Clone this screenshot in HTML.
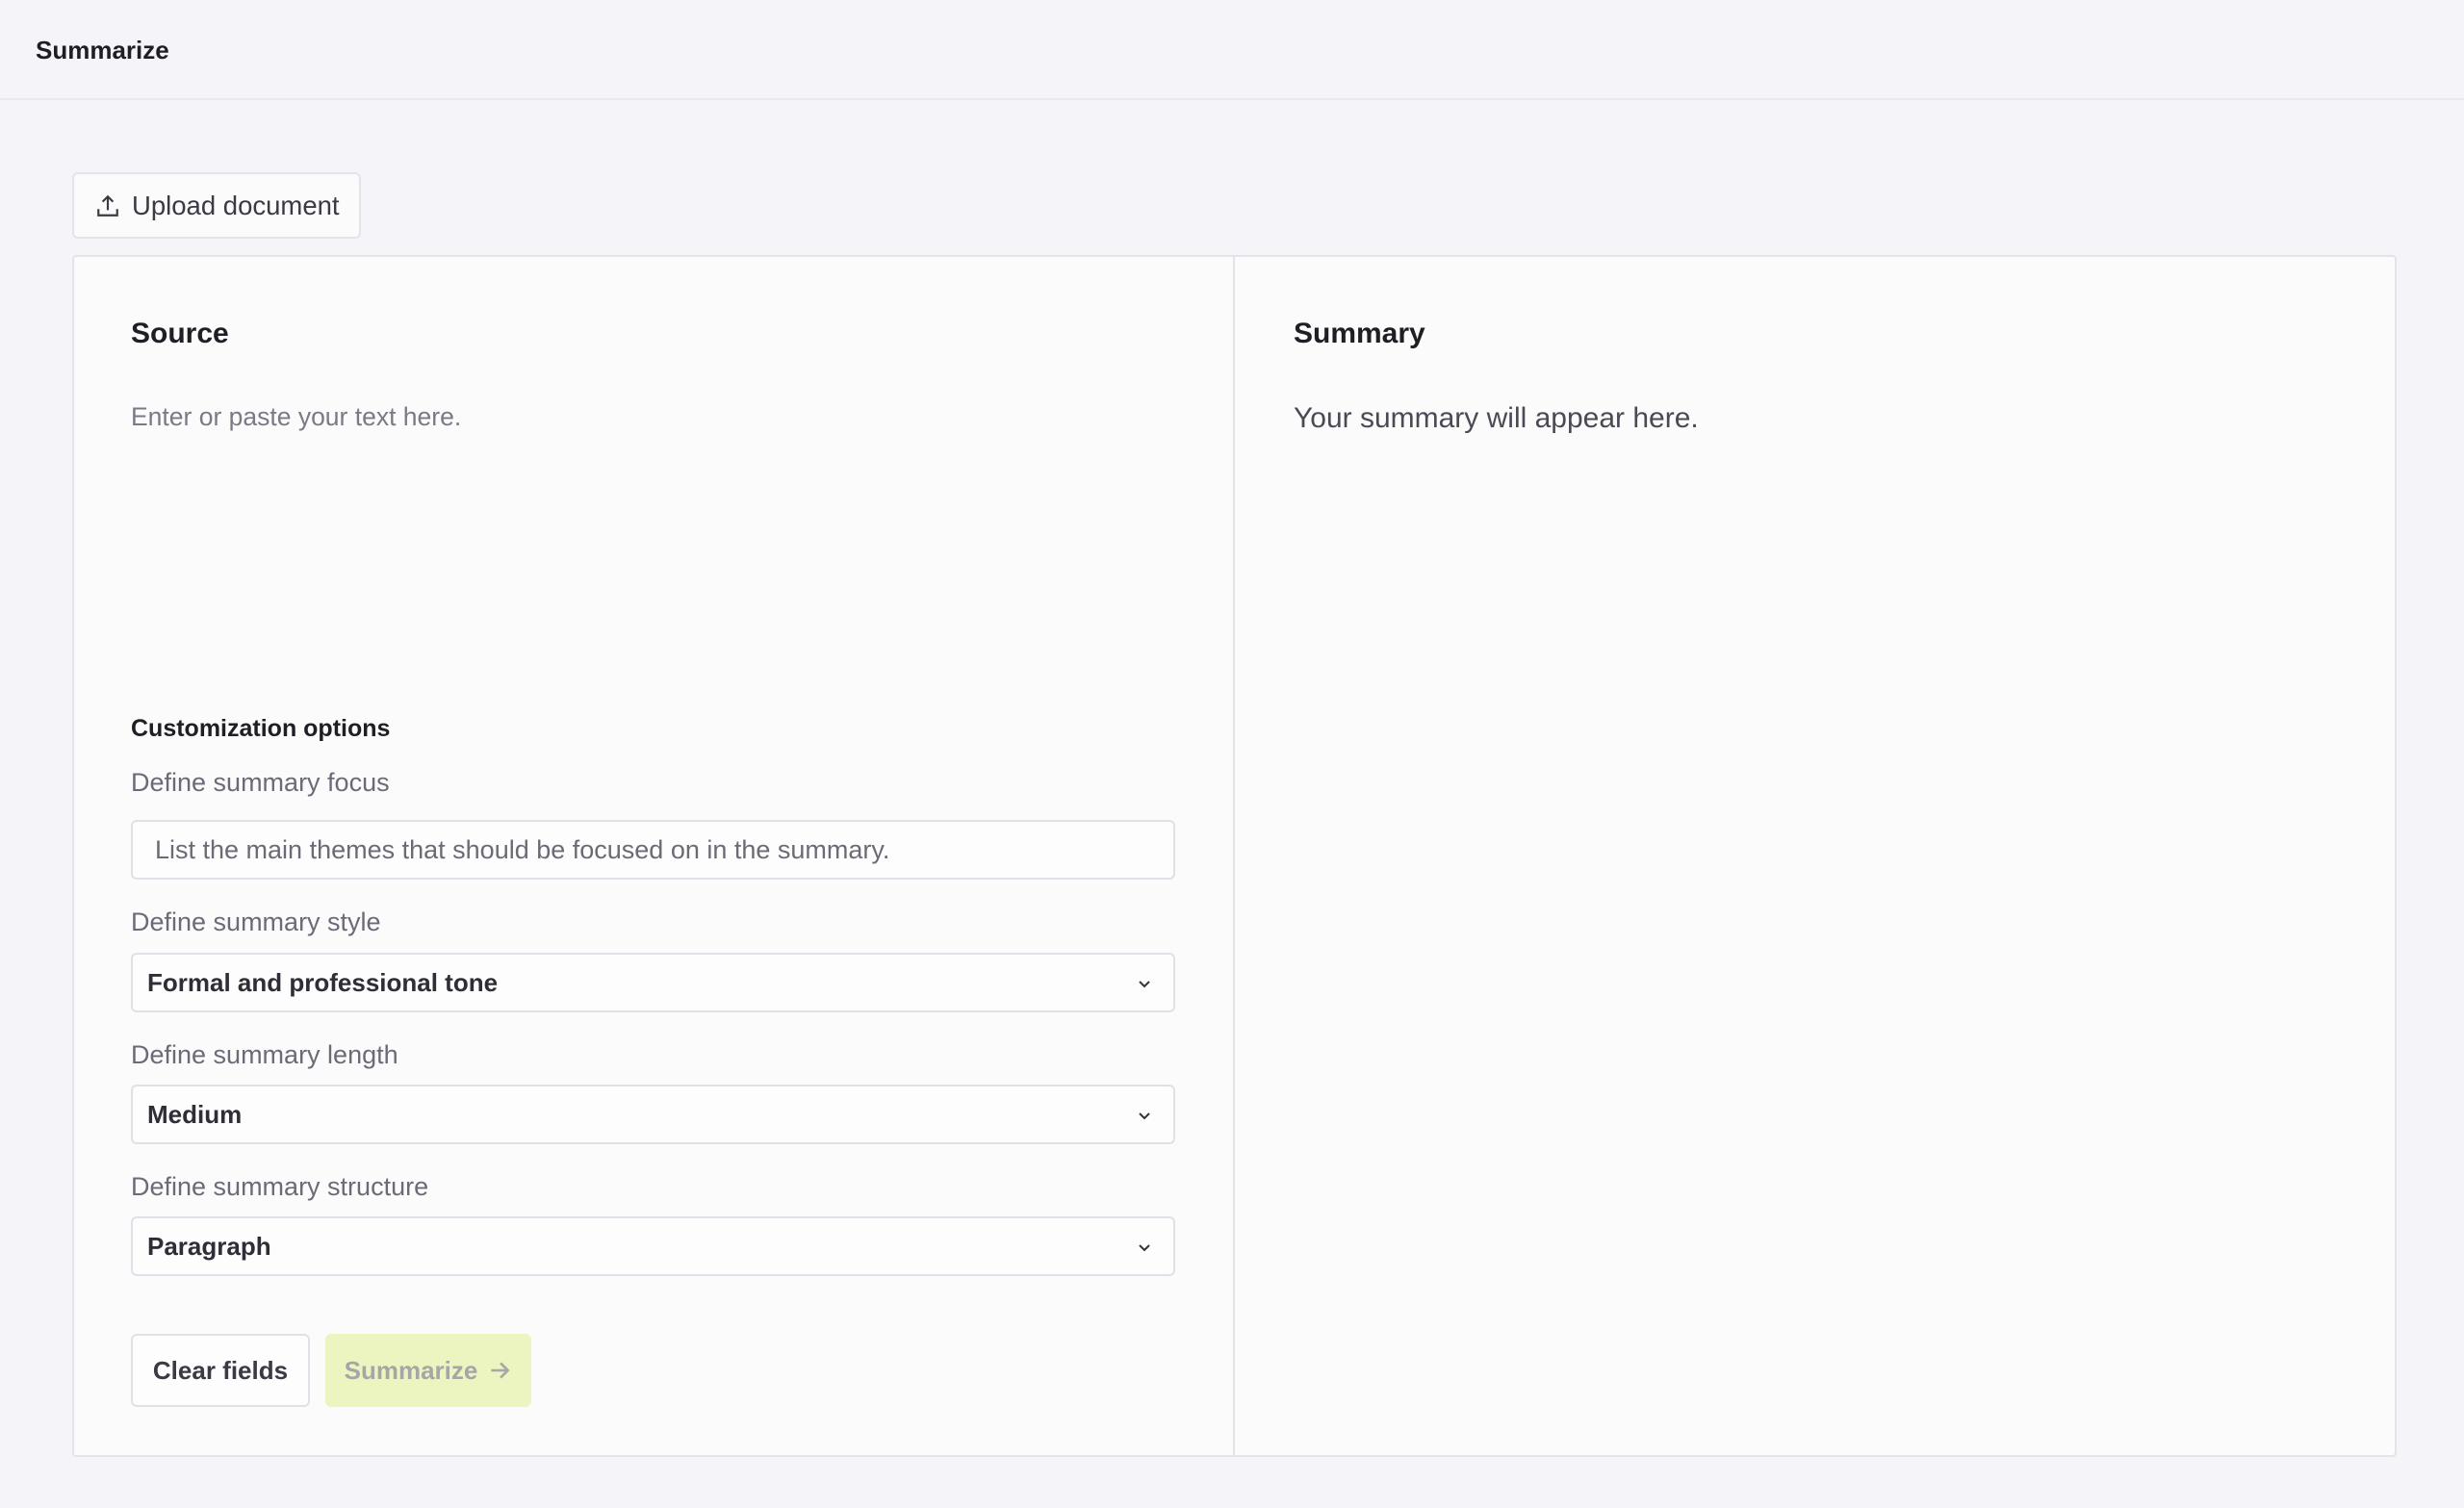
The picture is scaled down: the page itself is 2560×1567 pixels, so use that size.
<!DOCTYPE html>
<html><head><meta charset="utf-8"><style>
*{box-sizing:border-box;margin:0;padding:0}
body{width:2560px;height:1567px;background:#f5f5f9;font-family:"Liberation Sans",sans-serif;position:relative;overflow:hidden;color:#1e1e24}
.a{position:absolute}
.hdr{left:0;top:0;width:2560px;height:104px;border-bottom:2px solid #e8e8ee}
.title{left:37px;top:37px;font-size:26px;font-weight:bold}
.up{left:75px;top:179px;width:300px;height:69px;border:2px solid #e3e3ea;border-radius:6px;background:#fbfbfc;font-size:27.5px;color:#3a3a44;display:flex;align-items:center;padding-left:22px;gap:12px}
.card{left:75px;top:265px;width:2415px;height:1249px;border:2px solid #e3e3ea;border-radius:4px;background:#fbfbfc}
.div{left:1281px;top:265px;width:2px;height:1249px;background:#e3e3ea}
.h{font-size:30px;font-weight:bold}
.lbl{font-size:27px;color:#6b6b78;left:136px}
.box{left:136px;width:1085px;height:62px;border:2px solid #e0e0e8;border-radius:6px;background:#fdfdfe;display:flex;align-items:center;font-size:26px}
.sel{padding-left:15px;color:#2e2e36;font-weight:bold}
.chev{position:absolute;right:22px;top:22px}
.btn{top:1386px;height:76px;border-radius:6px;display:flex;align-items:center;justify-content:center;font-size:26px;font-weight:bold}
</style></head><body>
<div class="a hdr"></div>
<div class="a title">Summarize</div>
<div class="a up"><svg width="26" height="26" viewBox="0 0 24 24" fill="none" stroke="#3a3a44" stroke-width="2"><path d="M12 16V3M7 8l5-5 5 5M3 15v6h18v-6"/></svg>Upload document</div>
<div class="a card"></div>
<div class="a div"></div>
<div class="a h" style="left:136px;top:330px">Source</div>
<div class="a" style="left:136px;top:418px;font-size:26.5px;color:#7a7a86">Enter or paste your text here.</div>
<div class="a h" style="left:1344px;top:330px">Summary</div>
<div class="a" style="left:1344px;top:418px;font-size:30px;color:#4a4a55">Your summary will appear here.</div>
<div class="a" style="left:136px;top:743px;font-size:25px;font-weight:bold">Customization options</div>
<div class="a lbl" style="top:798px">Define summary focus</div>
<div class="a box" style="top:852px;padding-left:23px;color:#6b6b76;font-size:27px">List the main themes that should be focused on in the summary.</div>
<div class="a lbl" style="top:943px">Define summary style</div>
<div class="a box sel" style="top:990px">Formal and professional tone<svg class="chev" width="16" height="16" viewBox="0 0 16 16" fill="none" stroke="#333" stroke-width="2"><path d="M3 6l5 5 5-5"/></svg></div>
<div class="a lbl" style="top:1081px">Define summary length</div>
<div class="a box sel" style="top:1127px">Medium<svg class="chev" width="16" height="16" viewBox="0 0 16 16" fill="none" stroke="#333" stroke-width="2"><path d="M3 6l5 5 5-5"/></svg></div>
<div class="a lbl" style="top:1218px">Define summary structure</div>
<div class="a box sel" style="top:1264px">Paragraph<svg class="chev" width="16" height="16" viewBox="0 0 16 16" fill="none" stroke="#333" stroke-width="2"><path d="M3 6l5 5 5-5"/></svg></div>
<div class="a btn" style="left:136px;width:186px;border:2px solid #e0e0e8;background:#fdfdfe;color:#3a3a44">Clear fields</div>
<div class="a btn" style="left:338px;width:214px;background:#ecf4c0;color:#a6a6a6;gap:10px">Summarize<svg width="26" height="26" viewBox="0 0 24 24" fill="none" stroke="#a6a6a6" stroke-width="2.4"><path d="M4 12h16M13 5l7 7-7 7"/></svg></div>
</body></html>
